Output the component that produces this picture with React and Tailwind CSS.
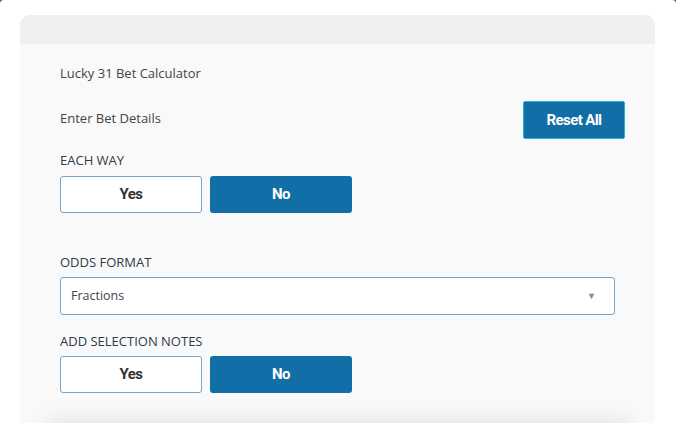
const ToggleRow = ({ value }) => (
  <div className="flex gap-[8px]">
    <button
      className={
        value
          ? "h-[37px] w-[142px] rounded-[3px] bg-[#126ea6] text-[15px] font-bold tracking-[-0.6px] text-white"
          : "h-[37px] w-[142px] rounded-[3px] border border-[#7aa3c8] bg-white text-[15px] font-bold tracking-[-0.6px] text-[#333]"
      }
      style={{ fontFamily: "'Liberation Sans Narrow', Roboto, sans-serif" }}
    >
      Yes
    </button>
    <button
      className={
        !value
          ? "h-[37px] w-[142px] rounded-[3px] bg-[#126ea6] text-[15px] font-bold tracking-[-0.6px] text-white"
          : "h-[37px] w-[142px] rounded-[3px] border border-[#7aa3c8] bg-white text-[15px] font-bold tracking-[-0.6px] text-[#333]"
      }
      style={{ fontFamily: "'Liberation Sans Narrow', Roboto, sans-serif" }}
    >
      No
    </button>
  </div>
);

const Label = ({ children, className = "" }) => (
  <div className={"text-[13px] leading-[18px] text-[#2d3b4a] " + className}>
    {children}
  </div>
);

export default function App() {
  return (
    <div className="bg-[#1a6fa5] font-['Open_Sans',sans-serif]">
      <div className="min-h-[423px] overflow-hidden rounded-t-[4px] bg-white pl-[20px] pr-[21px] pt-[15px]">
        <div className="overflow-hidden rounded-t-[10px]">
          <div className="h-[29px] bg-[#efefef]" />
          <div className="bg-[#f9f9f9] px-[40px] pt-[20px] pb-[30px]">
            <div className="text-[13px] leading-[18px] text-[#444]">
              Lucky 31 Bet Calculator
            </div>

            <div className="mt-[19px] -mr-[10px] flex items-center justify-between">
              <div className="mb-[4px] text-[13px] leading-[18px] text-[#444]">
                Enter Bet Details
              </div>
              <button
                className="h-[38px] w-[102px] rounded-[2px] border border-[#2bb3c9] bg-[#126ea6] text-[15px] font-bold tracking-[-0.6px] text-white"
                style={{ fontFamily: "'Liberation Sans Narrow', Roboto, sans-serif" }}
              >
                Reset All
              </button>
            </div>

            <Label className="mt-[12px]">EACH WAY</Label>
            <div className="mt-[7px]">
              <ToggleRow value={false} />
            </div>

            <Label className="mt-[40px]">ODDS FORMAT</Label>
            <div className="mt-[6px] flex h-[38px] items-center justify-between rounded-[3px] border border-[#7aa3c8] bg-white pl-[10px] pr-[18px]">
              <span className="text-[12.5px] text-[#444]">Fractions</span>
              <span className="text-[9px] text-[#888]">▼</span>
            </div>

            <Label className="mt-[17px]">ADD SELECTION NOTES</Label>
            <div className="mt-[6px]">
              <ToggleRow value={false} />
            </div>
          </div>
          <div className="h-[60px] bg-[#f9f9f9] px-[20px]">
            <div className="h-full rounded-t-[20px] bg-[#f9f9f9] shadow-[0_-6px_18px_rgba(0,0,0,0.07)]" />
          </div>
        </div>
      </div>
    </div>
  );
}
